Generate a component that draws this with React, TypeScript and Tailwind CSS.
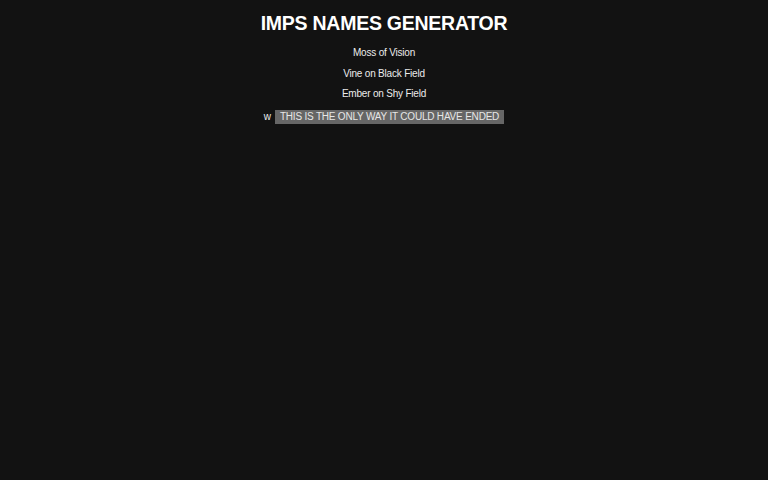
export default function App() {
  const names = ['Moss of Vision', 'Vine on Black Field', 'Ember on Shy Field'];
  return (
    <div className="min-h-[480px] w-full bg-[#121212] text-white font-['Liberation_Sans',Arial,sans-serif] flex flex-col items-center">
      <h1 className="mt-[12px] text-[19.5px] leading-[22px] font-bold tracking-[-0.25px]">IMPS NAMES GENERATOR</h1>
      <div className="mt-[9px] flex flex-col items-center text-[10px] leading-[20.5px] tracking-[-0.2px] text-[#ececec]">
        {names.map((n) => (
          <div key={n}>{n}</div>
        ))}
      </div>
      <div className="mt-[5px] flex items-center gap-[4px] text-[10px] leading-[14px] tracking-[-0.2px]">
        <span className="text-[#ececec]">w</span>
        <span className="bg-[#666666] text-[#e6e6e6] px-[5px]">THIS IS THE ONLY WAY IT COULD HAVE ENDED</span>
      </div>
    </div>
  );
}
